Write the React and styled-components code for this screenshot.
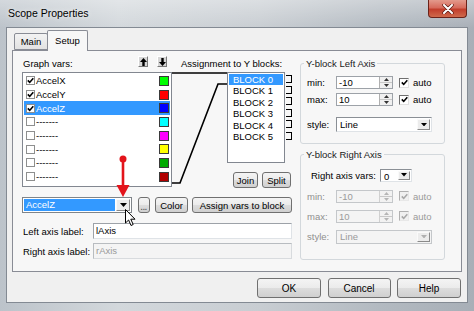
import React from 'react'
import styled, { createGlobalStyle } from 'styled-components'

const GlobalStyle = createGlobalStyle`
  html, body { margin: 0; padding: 0; overflow: hidden; }
  body {
    font-family: 'Liberation Sans', Arial, sans-serif;
    font-size: 9.5px;
    color: #000;
  }
`

const Window = styled.div`
  position: relative;
  width: 474px;
  height: 311px;
  display: flex;
  flex-direction: column;
  overflow: hidden;
  background:
    linear-gradient(180deg, rgba(255,255,255,0.35) 0%, rgba(255,255,255,0) 9%),
    linear-gradient(90deg, #bcc3ca 0%, #d3d8dc 25%, #c8cdd2 55%, #b3bac1 80%, #a8afb7 100%);
`
const TitleBar = styled.div`
  height: 27px;
  flex-shrink: 0;
  display: flex;
  align-items: flex-start;
  padding-left: 8px;
`
const Title = styled.span`
  margin-top: 7px;
  font-size: 10.5px;
  line-height: 12px;
  text-shadow: 0 0 5px rgba(255,255,255,0.9);
`
const CloseButton = styled.div`
  margin-left: auto;
  margin-right: 7px;
  width: 39px;
  height: 18px;
  box-sizing: border-box;
  border: 1px solid #6b2219;
  border-top: none;
  border-radius: 0 0 4px 4px;
  background: linear-gradient(180deg, #e39a8c 0%, #d76b5c 45%, #c23e2c 55%, #cf6a4c 100%);
  display: flex;
  align-items: center;
  justify-content: center;
`
const Client = styled.div`
  flex: 1;
  margin: 0 6px 8px 6px;
  background: #f0f0f0;
  border: 1px solid #838a93;
  display: flex;
  flex-direction: column;
  padding: 0 5px 4px 5px;
`
const TabStrip = styled.div`
  height: 22px;
  flex-shrink: 0;
  display: flex;
  align-items: flex-end;
  padding-left: 2px;
  position: relative;
  z-index: 1;
`
const Tab = styled.div`
  box-sizing: border-box;
  width: ${p => p.$w}px;
  height: ${p => (p.$active ? 21 : 17)}px;
  margin-bottom: ${p => (p.$active ? -1 : 0)}px;
  margin-left: ${p => (p.$active ? -1 : 0)}px;
  border: 1px solid #898c95;
  border-bottom: ${p => (p.$active ? 'none' : '1px solid #898c95')};
  border-radius: 2px 2px 0 0;
  background: ${p => (p.$active ? '#f7f7f7' : 'linear-gradient(180deg, #f3f3f3, #e2e2e2)')};
  display: flex;
  align-items: center;
  justify-content: center;
  padding-bottom: ${p => (p.$active ? 2 : 0)}px;
`
const TabPanel = styled.div`
  height: 222px;
  flex-shrink: 0;
  box-sizing: border-box;
  border: 1px solid #898c95;
  background: #f7f7f7;
  display: flex;
  padding-left: 9px;
`
const DialogButtons = styled.div`
  margin-top: 6px;
  display: flex;
  justify-content: flex-end;
  gap: 6.5px;
  padding-right: 1px;
`
const Button = styled.div`
  box-sizing: border-box;
  width: ${p => p.$w}px;
  height: ${p => p.$h || 16}px;
  margin-left: ${p => p.$ml || 0}px;
  border: 1px solid #707070;
  border-radius: 3px;
  background: linear-gradient(180deg, #f4f4f4 0%, #ebebeb 50%, #dddddd 51%, #d0d0d0 100%);
  display: flex;
  align-items: center;
  justify-content: center;
  font-size: ${p => p.$fs || 9.5}px;
  color: ${p => (p.$muted ? '#555' : '#000')};
  white-space: nowrap;
`

/* left side */
const LeftCol = styled.div`
  width: 271px;
  display: flex;
  flex-direction: column;
`
const AssignGrid = styled.div`
  display: grid;
  grid-template-columns: 150px 55px 66px;
  grid-template-rows: 21px auto;
`
const GraphHeader = styled.div`
  display: flex;
  align-items: center;
  padding: 0 5px 0 1px;
`
const HeaderLabel = styled.span`
  flex: 1;
  padding-top: 3px;
  padding-left: ${p => p.$pl || 0}px;
  white-space: nowrap;
`
const AssignLabel = styled(HeaderLabel)`
  grid-column: 2 / 4;
  align-self: center;
`
const MoveButtons = styled.div`
  display: flex;
  gap: 9px;
`
const MoveButton = styled.div`
  width: 10px;
  height: 11px;
  box-sizing: border-box;
  background: #d6d6d6;
  border: 1px solid;
  border-color: #fff #7a7a7a #7a7a7a #fff;
  display: flex;
  align-items: center;
  justify-content: center;
`
const VarList = styled.div`
  width: 150px;
  height: 115px;
  box-sizing: border-box;
  border: 1px solid #828790;
  background: #fff;
  padding: 1px;
`
const VarRow = styled.div`
  height: 13.7px;
  display: flex;
  align-items: center;
  padding-left: 2px;
  background: ${p => (p.$selected ? '#3399ff' : 'transparent')};
  color: ${p => (p.$selected ? '#fff' : '#000')};
`
const ListCheck = styled.div`
  width: 9px;
  height: 9px;
  box-sizing: border-box;
  border: 1px solid #8e8f8f;
  background: #fff;
  margin-right: 1px;
  display: flex;
  align-items: center;
  justify-content: center;
`
const Swatch = styled.div`
  margin-left: auto;
  margin-right: 1px;
  width: 10px;
  height: 10px;
  box-sizing: border-box;
  border: 1px solid #3a3a3a;
  background: ${p => p.$color};
`
const BlockColumn = styled.div`
  display: flex;
  flex-direction: column;
`
const BlockRow = styled.div`
  display: flex;
`
const BlockList = styled.div`
  width: 58px;
  height: 91px;
  box-sizing: border-box;
  border: 1px solid #828790;
  background: #fff;
  padding: 1px 1px;
`
const BlockItem = styled.div`
  height: 11.4px;
  line-height: 11.4px;
  padding-left: 4px;
  font-size: 9.5px;
  background: ${p => (p.$selected ? '#3399ff' : 'transparent')};
  color: ${p => (p.$selected ? '#fff' : '#000')};
`
const Brackets = styled.div`
  margin-left: 1px;
  padding-top: 1px;
  display: flex;
  flex-direction: column;
`
const BracketCell = styled.div`
  height: 11.4px;
  display: flex;
  align-items: center;
`
const Bracket = styled.div`
  width: 6px;
  height: 8px;
  box-sizing: border-box;
  border: 1.6px solid #000;
  border-left: none;
`
const BlockButtons = styled.div`
  margin-top: 9px;
  display: flex;
  gap: 4px;
  padding-left: 6px;
`
const ControlRow = styled.div`
  display: flex;
  align-items: center;
  margin-top: ${p => p.$mt}px;
`
const VarCombo = styled.div`
  width: 110px;
  height: 16px;
  box-sizing: border-box;
  border: 1px solid #7f8489;
  background: #fff;
  display: flex;
  padding: 1px;
  margin-right: 6px;
`
const ComboText = styled.div`
  flex: 1;
  background: #3399ff;
  color: #fff;
  padding-left: 2px;
  line-height: 12px;
`
const DropButton = styled.div`
  width: ${p => p.$w || 14}px;
  box-sizing: border-box;
  border: 1px solid;
  border-color: #fafafa #8a8a8a #8a8a8a #fafafa;
  background: #ececec;
  display: flex;
  align-items: center;
  justify-content: center;
  margin-left: 1px;
`
const Dots = styled.span`
  display: block;
  font-size: 10px;
  line-height: 10px;
  letter-spacing: -0.6px;
  margin: 3px 0 0 -1px;
  color: #4a4a4a;
`
const AxisLabel = styled.span`
  width: 70px;
  padding-left: 1px;
  white-space: nowrap;
`
const TextInput = styled.div`
  width: ${p => p.$w}px;
  height: 16px;
  box-sizing: border-box;
  border: 1px solid;
  border-color: ${p => (p.$disabled ? '#b8bcc0 #d8dbde #d8dbde #b8bcc0' : '#9da2a8 #dfe3e7 #dfe3e7 #9da2a8')};
  background: ${p => (p.$disabled ? '#f4f4f4' : '#fff')};
  color: ${p => (p.$disabled ? '#9a9a9a' : '#000')};
  padding-left: 2px;
  line-height: 14px;
`

/* right side */
const RightCol = styled.div`
  width: 145px;
  margin-left: 7px;
  padding-top: 6.5px;
  display: flex;
  flex-direction: column;
`
const GroupBox = styled.fieldset`
  margin: ${p => p.$mt || 0}px 0 0 0;
  padding: 0 6px;
  height: ${p => p.$h}px;
  box-sizing: border-box;
  border: 1px solid #d3d8dc;
  border-radius: 3px;
  min-width: 0;
`
const Legend = styled.legend`
  padding: 0 2px;
  margin-left: -3px;
  line-height: 11px;
  font-size: 9.5px;
  font-weight: normal;
  color: #1a1a1a;
`
const FieldRow = styled.div`
  display: flex;
  align-items: center;
  height: ${p => p.$h || 13}px;
  margin-top: ${p => p.$mt}px;
`
const FieldLabel = styled.span`
  width: ${p => p.$w || 29}px;
  padding-left: ${p => p.$pl || 0}px;
  box-sizing: border-box;
  color: ${p => (p.$disabled ? '#8f8f8f' : '#000')};
  white-space: nowrap;
`
const Spin = styled.div`
  width: 57px;
  height: 100%;
  box-sizing: border-box;
  border: 1px solid ${p => (p.$disabled ? '#c4c7ca' : '#9da2a8')};
  background: ${p => (p.$disabled ? '#f4f4f4' : '#fff')};
  display: flex;
`
const SpinValue = styled.div`
  flex: 1;
  padding-left: 2px;
  line-height: 11px;
  color: ${p => (p.$disabled ? '#9a9a9a' : '#000')};
`
const SpinButtons = styled.div`
  width: 12px;
  display: flex;
  flex-direction: column;
  border-left: 1px solid ${p => (p.$disabled ? '#d0d0d0' : '#b0b0b0')};
`
const SpinHalf = styled.div`
  flex: 1;
  background: ${p => (p.$disabled ? '#f2f2f2' : '#f0f0f0')};
  display: flex;
  align-items: center;
  justify-content: center;
  & + & { border-top: 1px solid #c8c8c8; }
`
const AutoCheck = styled.div`
  width: 10px;
  height: 10px;
  margin-left: 6px;
  box-sizing: border-box;
  border: 1px solid;
  border-color: ${p => (p.$disabled ? '#b0b0b0 #e8e8e8 #e8e8e8 #b0b0b0' : '#707070 #e0e0e0 #e0e0e0 #707070')};
  background: ${p => (p.$disabled ? '#f0f0f0' : '#fff')};
  display: flex;
  align-items: center;
  justify-content: center;
`
const AutoText = styled.span`
  margin-left: 4px;
  color: ${p => (p.$disabled ? '#9a9a9a' : '#000')};
`
const Select = styled.div`
  width: ${p => p.$w}px;
  height: 100%;
  box-sizing: border-box;
  border: 1px solid;
  border-color: ${p => (p.$disabled ? '#c4c7ca' : '#8a8f95 #dfe3e7 #dfe3e7 #8a8f95')};
  background: ${p => (p.$disabled ? '#f4f4f4' : '#fff')};
  display: flex;
  padding: 1px;
`
const SelectText = styled.div`
  flex: 1;
  padding-left: 2px;
  line-height: ${p => p.$lh || 11}px;
  color: ${p => (p.$disabled ? '#9a9a9a' : '#000')};
`

/* overlays */
const Overlay = styled.svg`
  position: absolute;
  left: ${p => p.$x}px;
  top: ${p => p.$y}px;
  pointer-events: none;
  overflow: visible;
`

const Check = ({ color = '#000' }) => (
  <svg width="7" height="7" viewBox="0 0 7 7">
    <path d="M0.8 3.4 L2.7 5.4 L6.3 1.2" fill="none" stroke={color} strokeWidth="1.6" />
  </svg>
)
const Tri = ({ up, color = '#000', w = 7, h = 4 }) => (
  <svg width={w} height={h} viewBox="0 0 7 4">
    <path d={up ? 'M0 4 L3.5 0 L7 4 Z' : 'M0 0 L7 0 L3.5 4 Z'} fill={color} />
  </svg>
)
const BigArrow = ({ down }) => (
  <svg width="7" height="8" viewBox="0 0 7 8">
    <path
      d={down ? 'M2.3 0 H4.7 V4 H7 L3.5 8 L0 4 H2.3 Z' : 'M2.3 8 H4.7 V4 H7 L3.5 0 L0 4 H2.3 Z'}
      fill="#000"
    />
  </svg>
)

const SpinBox = ({ value, disabled }) => (
  <Spin $disabled={disabled}>
    <SpinValue $disabled={disabled}>{value}</SpinValue>
    <SpinButtons $disabled={disabled}>
      <SpinHalf $disabled={disabled}><Tri up w={5} h={3} color={disabled ? '#b5b5b5' : '#333'} /></SpinHalf>
      <SpinHalf $disabled={disabled}><Tri w={5} h={3} color={disabled ? '#b5b5b5' : '#333'} /></SpinHalf>
    </SpinButtons>
  </Spin>
)

const vars = [
  { name: 'AccelX', checked: true, color: '#00ff00' },
  { name: 'AccelY', checked: true, color: '#ff0000' },
  { name: 'AccelZ', checked: true, color: '#0000ff', selected: true },
  { name: '-------', color: '#00ffff' },
  { name: '-------', color: '#ff00ff' },
  { name: '-------', color: '#ffff00' },
  { name: '-------', color: '#00aa00' },
  { name: '-------', color: '#b00000' },
]
const blocks = ['BLOCK 0', 'BLOCK 1', 'BLOCK 2', 'BLOCK 3', 'BLOCK 4', 'BLOCK 5']

const AxisGroup = ({ title, children, mt, h }) => (
  <GroupBox $mt={mt} $h={h}>
    <Legend>{title}</Legend>
    {children}
  </GroupBox>
)

const RangeRow = ({ label, value, disabled, mt }) => (
  <FieldRow $mt={mt}>
    <FieldLabel $disabled={disabled}>{label}</FieldLabel>
    <SpinBox value={value} disabled={disabled} />
    <AutoCheck $disabled={disabled}><Check color={disabled ? '#a8a8a8' : '#000'} /></AutoCheck>
    <AutoText $disabled={disabled}>auto</AutoText>
  </FieldRow>
)

const StyleRow = ({ disabled, mt, h }) => (
  <FieldRow $mt={mt} $h={h}>
    <FieldLabel $disabled={disabled}>style:</FieldLabel>
    <Select $w={96} $disabled={disabled}>
      <SelectText $disabled={disabled} $lh={h - 4}>Line</SelectText>
      <DropButton $w={13}><Tri color={disabled ? '#b0b0b0' : '#000'} w={6} h={3.5} /></DropButton>
    </Select>
  </FieldRow>
)

export default function App() {
  return (
    <Window>
      <GlobalStyle />
      <TitleBar>
        <Title>Scope Properties</Title>
        <CloseButton>
          <svg width="12" height="10" viewBox="0 0 12 10">
            <path d="M2 1 L10 9 M10 1 L2 9" stroke="#5a1a12" strokeWidth="3.4" strokeLinecap="round" />
            <path d="M2 1 L10 9 M10 1 L2 9" stroke="#fff" strokeWidth="2" strokeLinecap="round" />
          </svg>
        </CloseButton>
      </TitleBar>

      <Client>
        <TabStrip>
          <Tab $w={34}>Main</Tab>
          <Tab $w={41} $active>Setup</Tab>
        </TabStrip>

        <TabPanel>
          <LeftCol>
            <AssignGrid>
              <GraphHeader>
                <HeaderLabel>Graph vars:</HeaderLabel>
                <MoveButtons>
                  <MoveButton><BigArrow /></MoveButton>
                  <MoveButton><BigArrow down /></MoveButton>
                </MoveButtons>
              </GraphHeader>
              <AssignLabel $pl={9}>Assignment to Y blocks:</AssignLabel>

              <VarList>
                {vars.map((v, i) => (
                  <VarRow key={i} $selected={v.selected}>
                    <ListCheck>{v.checked && <Check />}</ListCheck>
                    <span>{v.name}</span>
                    <Swatch $color={v.color} />
                  </VarRow>
                ))}
              </VarList>

              <svg width="55" height="115" viewBox="0 0 55 115">
                <path d="M0 1 H55" stroke="#000" strokeWidth="1.6" fill="none" />
                <path d="M0 111 H8 L46 12 H55" stroke="#000" strokeWidth="1.6" fill="none" />
              </svg>

              <BlockColumn>
                <BlockRow>
                  <BlockList>
                    {blocks.map((b, i) => (
                      <BlockItem key={b} $selected={i === 0}>{b}</BlockItem>
                    ))}
                  </BlockList>
                  <Brackets>
                    {blocks.map(b => (
                      <BracketCell key={b}><Bracket /></BracketCell>
                    ))}
                  </Brackets>
                </BlockRow>
                <BlockButtons>
                  <Button $w={25}>Join</Button>
                  <Button $w={29}>Split</Button>
                </BlockButtons>
              </BlockColumn>
            </AssignGrid>

            <ControlRow $mt={9}>
              <VarCombo>
                <ComboText>AccelZ</ComboText>
                <DropButton><Tri w={7} h={4} /></DropButton>
              </VarCombo>
              <Button $w={12} $muted><Dots>...</Dots></Button>
              <Button $w={33} $ml={5}>Color</Button>
              <Button $w={100} $ml={4}>Assign vars to block</Button>
            </ControlRow>

            <ControlRow $mt={10}>
              <AxisLabel>Left axis label:</AxisLabel>
              <TextInput $w={199}>lAxis</TextInput>
            </ControlRow>
            <ControlRow $mt={4}>
              <AxisLabel>Right axis label:</AxisLabel>
              <TextInput $w={199} $disabled>rAxis</TextInput>
            </ControlRow>
          </LeftCol>

          <RightCol>
            <AxisGroup title="Y-block Left Axis" h={86}>
              <RangeRow label="min:" value="-10" mt={7.5} />
              <RangeRow label="max:" value="10" mt={4} />
              <StyleRow mt={11} h={15} />
            </AxisGroup>

            <AxisGroup title="Y-block Right Axis" mt={5.5} h={110.5}>
              <FieldRow $mt={8.5}>
                <FieldLabel $w={73} $pl={4}>Right axis vars:</FieldLabel>
                <Select $w={32}>
                  <SelectText>0</SelectText>
                  <DropButton $w={12}><Tri w={6} h={3.5} /></DropButton>
                </Select>
              </FieldRow>
              <RangeRow label="min:" value="-10" mt={8} disabled />
              <RangeRow label="max:" value="10" mt={7} disabled />
              <StyleRow mt={7} h={14} disabled />
            </AxisGroup>
          </RightCol>
        </TabPanel>

        <DialogButtons>
          <Button $w={64} $h={20} $fs={10}>OK</Button>
          <Button $w={63} $h={20} $fs={10}>Cancel</Button>
          <Button $w={64} $h={20} $fs={10}>Help</Button>
        </DialogButtons>
      </Client>

      <Overlay $x={110} $y={152} width="26" height="46" viewBox="0 0 26 46">
        <circle cx="13" cy="7" r="3.5" fill="#e3141b" />
        <path d="M13 7 V36" stroke="#e3141b" strokeWidth="2.6" />
        <path d="M6.5 33 H19.5 L13 45 Z" fill="#e3141b" />
      </Overlay>
      <Overlay $x={125} $y={209} width="12" height="18" viewBox="0 0 12 18">
        <path
          d="M0.5 0.5 V14 L3.6 11 L6 16.5 L8.2 15.5 L5.8 10.2 H10 Z"
          fill="#fff"
          stroke="#000"
          strokeWidth="1"
          strokeLinejoin="round"
        />
      </Overlay>
    </Window>
  )
}
